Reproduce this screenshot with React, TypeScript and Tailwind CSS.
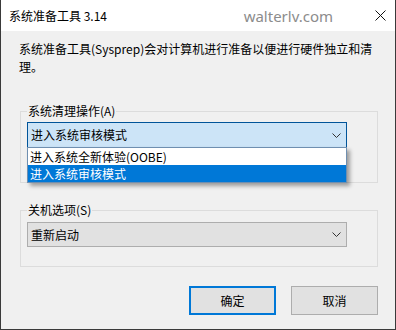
import React from 'react';

const Chevron = () => (
  <svg width="9" height="5" viewBox="0 0 9 5" className="shrink-0">
    <path d="M0.5 0.5 L4.5 4.5 L8.5 0.5" fill="none" stroke="#333" strokeWidth="1" />
  </svg>
);

const App = () => {
  return (
    <div className="w-[396px] h-[330px] flex flex-col border-x border-b border-[#3a3a3a] font-['Noto_Sans_CJK_SC',sans-serif] text-[12px] text-black">
      {/* Title bar */}
      <div className="h-[31px] shrink-0 bg-white flex items-center pl-[8px]">
        <span className="leading-[16px]">系统准备工具 3.14</span>
        <span className="ml-auto mr-[42px] text-[15px] leading-[18px] text-[#8c8c8c] font-['Noto_Sans',sans-serif]">walterlv.com</span>
        <svg width="11" height="11" viewBox="0 0 11 11" className="mr-[9px]">
          <path d="M0.5 0.5 L10.5 10.5 M10.5 0.5 L0.5 10.5" stroke="#111" strokeWidth="1" />
        </svg>
      </div>

      {/* Body */}
      <div className="flex-1 bg-[#f0f0f0] pl-[18px] pr-[17px] pt-[9px] flex flex-col">
        <p className="leading-[18px] whitespace-nowrap">
          系统准备工具(Sysprep)会对计算机进行准备以便进行硬件独立和清
          <br />
          理。
        </p>

        <fieldset className="ml-[1px] mt-[27px] w-[358px] border border-[#dcdcdc] pl-[6px] pb-[34px]">
          <legend className="px-[1px] leading-[16px]">系统清理操作(A)</legend>
          <div className="relative mt-[3px] w-[320px]">
            <div className="h-[26px] border border-[#005499] bg-[#cce4f7] flex items-center pl-[3px] pr-[5px]">
              <span className="flex-1 leading-[16px]">进入系统审核模式</span>
              <Chevron />
            </div>
            {/* open dropdown list */}
            <div className="absolute left-0 top-[25px] w-[320px] border border-[#6f8fb0] bg-white shadow-[3px_3px_4px_rgba(0,0,0,0.35)]">
              <div className="h-[17px] pl-[2px] flex items-center leading-[16px]">进入系统全新体验(OOBE)</div>
              <div className="h-[17px] pl-[2px] flex items-center leading-[16px] bg-[#0078d7] text-white">进入系统审核模式</div>
            </div>
          </div>
        </fieldset>

        <fieldset className="ml-[1px] mt-[19px] w-[358px] border border-[#dcdcdc] pl-[6px] pb-[19px]">
          <legend className="px-[1px] leading-[16px]">关机选项(S)</legend>
          <div className="mt-[4px] w-[320px] h-[25px] border border-[#adadad] bg-[#e1e1e1] flex items-center pl-[3px] pr-[5px]">
            <span className="flex-1 leading-[16px]">重新启动</span>
            <Chevron />
          </div>
        </fieldset>

        <div className="mt-[19px] flex justify-end gap-[15px]">
          <button className="w-[87px] h-[29px] border-2 border-[#0078d7] bg-[#e1e1e1] leading-[16px]">确定</button>
          <button className="w-[87px] h-[29px] border border-[#adadad] bg-[#e1e1e1] leading-[16px]">取消</button>
        </div>
      </div>
    </div>
  );
};

export default App;
